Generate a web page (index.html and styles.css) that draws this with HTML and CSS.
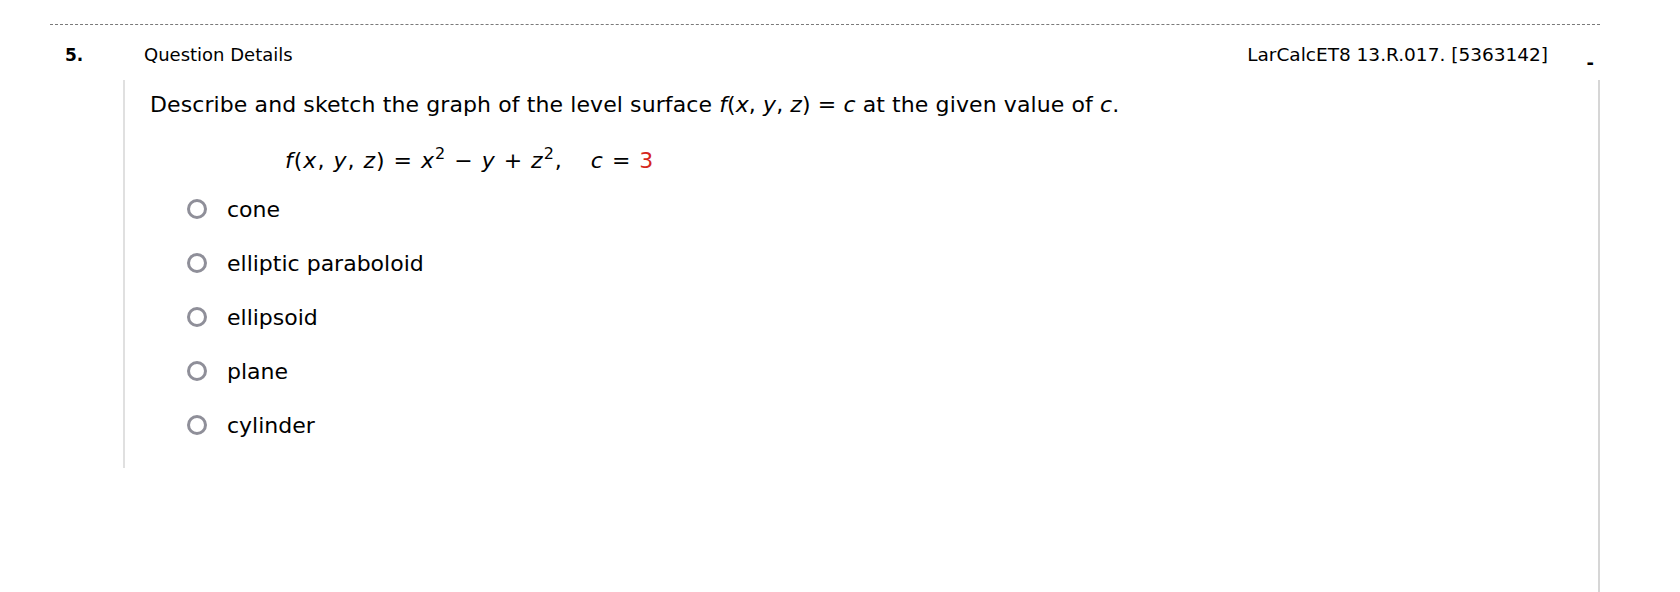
FILE: index.html
```html
<!DOCTYPE html>
<html>
<head>
<meta charset="utf-8">
<link rel="stylesheet" href="styles.css">
</head>
<body>
<div class="page">
  <div class="question">
    <div class="q-header">
      <div class="q-num">5.</div>
      <div class="q-title">Question Details</div>
      <div class="q-ref">LarCalcET8 13.R.017. [5363142]</div>
      <div class="q-min">-</div>
    </div>
    <div class="q-frame">
      <div class="q-body">
        <p class="prompt">Describe and sketch the graph of the level surface <i>f</i>(<i>x</i>, <i>y</i>, <i>z</i>) = <i>c</i> at the given value of <i>c</i>.</p>
        <p class="formula"><i>f</i>(<i>x</i>, <i>y</i>, <i>z</i>) = <i>x</i><sup>2</sup> − <i>y</i> + <i>z</i><sup>2</sup>,<span class="gap"></span><i>c</i> = <span class="red">3</span></p>
        <ul class="options">
          <li class="option"><span class="radio"></span><span class="label">cone</span></li>
          <li class="option"><span class="radio"></span><span class="label">elliptic paraboloid</span></li>
          <li class="option"><span class="radio"></span><span class="label">ellipsoid</span></li>
          <li class="option"><span class="radio"></span><span class="label">plane</span></li>
          <li class="option"><span class="radio"></span><span class="label">cylinder</span></li>
        </ul>
      </div>
    </div>
  </div>
</div>
</body>
</html>
```
FILE: styles.css
```css
html, body {
  margin: 0;
  padding: 0;
  background: #fff;
}
body {
  font-family: "DejaVu Sans", Verdana, sans-serif;
  color: #000;
}
.page {
  padding: 24px 0 0 50px;
  width: 1550px;
  height: 568px;
}
.question {
  border-top: 1px dashed #7a7a7a;
  height: 100%;
  display: flex;
  flex-direction: column;
}
.q-header {
  display: flex;
  align-items: baseline;
  height: 55px;
  padding-top: 18px;
  box-sizing: border-box;
  line-height: 24px;
}
.q-num {
  font-weight: bold;
  font-size: 17px;
  width: 94px;
  padding-left: 15px;
  box-sizing: border-box;
}
.q-title {
  font-size: 18px;
}
.q-ref {
  margin-left: auto;
  font-size: 18.5px;
}
.q-min {
  align-self: flex-start;
  width: 52px;
  padding-top: 11px;
  padding-right: 6px;
  box-sizing: border-box;
  text-align: right;
  font-size: 18px;
  font-weight: bold;
  line-height: 18px;
}
.q-frame {
  flex: 1;
  margin-left: 73px;
  border-right: 2px solid #d6d6d6;
  width: 1477px;
  box-sizing: border-box;
}
.q-body {
  border-left: 2px solid #e0e0e0;
  height: 388px;
  padding-left: 25px;
  box-sizing: border-box;
  font-size: 22px;
}
.prompt {
  margin: 0;
  padding-top: 12px;
  line-height: 26px;
  letter-spacing: 0.1px;
}
.formula {
  margin: 30px 0 0 135px;
  line-height: 26px;
  letter-spacing: 1px;
}
.formula sup {
  font-size: 16px;
  vertical-align: 9px;
  line-height: 0;
}
.gap {
  display: inline-block;
  width: 28px;
}
.red {
  color: #d5261c;
}
.options {
  list-style: none;
  margin: 22px 0 0 0;
  padding: 0 0 0 37px;
  display: flex;
  flex-direction: column;
  gap: 28px;
}
.option {
  display: flex;
  align-items: center;
  height: 26px;
}
.radio {
  width: 14px;
  height: 14px;
  border: 3px solid #8f8f99;
  border-radius: 50%;
  margin-right: 20px;
  flex: none;
}
```
